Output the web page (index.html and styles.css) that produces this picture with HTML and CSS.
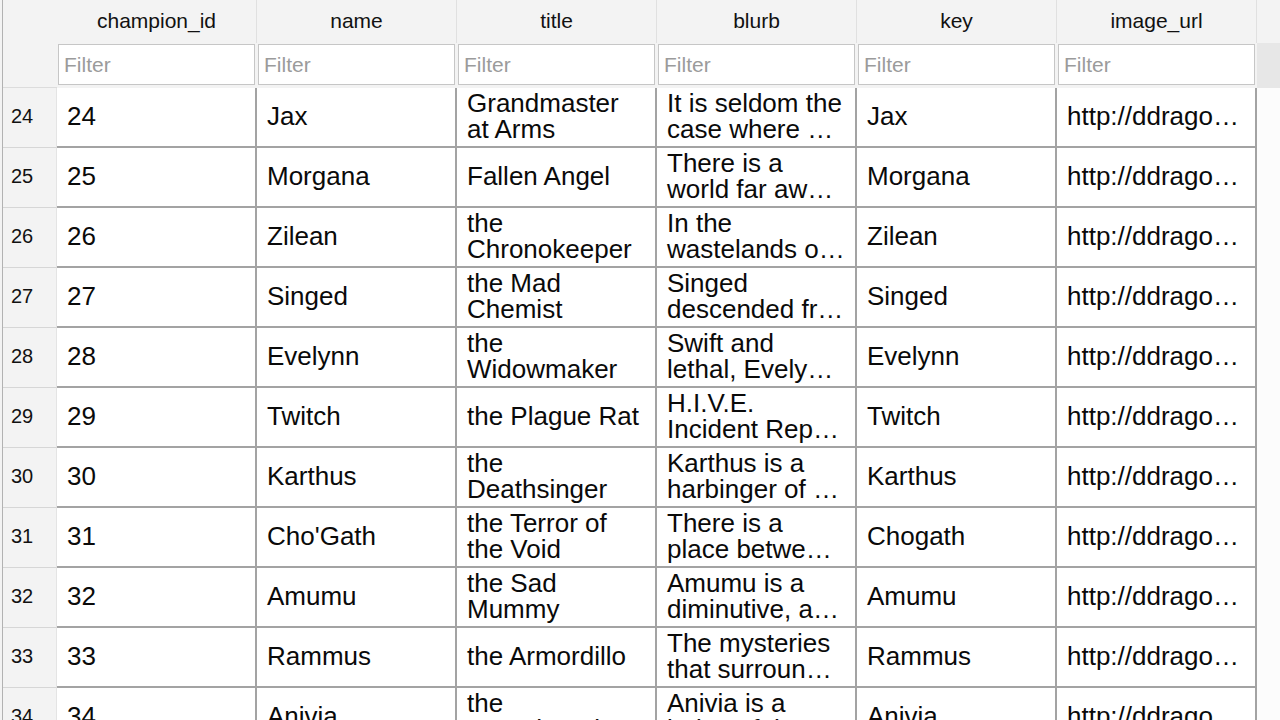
FILE: index.html
```html
<!DOCTYPE html>
<html>
<head>
<meta charset="utf-8">
<title>champions</title>
<link rel="stylesheet" href="styles.css">
</head>
<body>
<div class="grid">
  <div class="hcell corner"></div>
  <div class="hcell">champion_id</div>
  <div class="hcell">name</div>
  <div class="hcell">title</div>
  <div class="hcell">blurb</div>
  <div class="hcell">key</div>
  <div class="hcell">image_url</div>
  <div class="hcell fill"></div>

  <div class="fcell corner"></div>
  <div class="fcell"><input class="filter" placeholder="Filter"></div>
  <div class="fcell"><input class="filter" placeholder="Filter"></div>
  <div class="fcell"><input class="filter" placeholder="Filter"></div>
  <div class="fcell"><input class="filter" placeholder="Filter"></div>
  <div class="fcell"><input class="filter" placeholder="Filter"></div>
  <div class="fcell"><input class="filter" placeholder="Filter"></div>
  <div class="fcell ffill"></div>

  <div class="rh">24</div><div class="c">24</div><div class="c">Jax</div><div class="c">Grandmaster at Arms</div><div class="c nw">It is seldom the<br>case where …</div><div class="c">Jax</div><div class="c nw">http://ddrago…</div><div class="dfill"></div>
  <div class="rh">25</div><div class="c">25</div><div class="c">Morgana</div><div class="c">Fallen Angel</div><div class="c nw">There is a<br>world far aw…</div><div class="c">Morgana</div><div class="c nw">http://ddrago…</div><div class="dfill"></div>
  <div class="rh">26</div><div class="c">26</div><div class="c">Zilean</div><div class="c">the Chronokeeper</div><div class="c nw">In the<br>wastelands o…</div><div class="c">Zilean</div><div class="c nw">http://ddrago…</div><div class="dfill"></div>
  <div class="rh">27</div><div class="c">27</div><div class="c">Singed</div><div class="c">the Mad Chemist</div><div class="c nw">Singed<br>descended fr…</div><div class="c">Singed</div><div class="c nw">http://ddrago…</div><div class="dfill"></div>
  <div class="rh">28</div><div class="c">28</div><div class="c">Evelynn</div><div class="c">the Widowmaker</div><div class="c nw">Swift and<br>lethal, Evely…</div><div class="c">Evelynn</div><div class="c nw">http://ddrago…</div><div class="dfill"></div>
  <div class="rh">29</div><div class="c">29</div><div class="c">Twitch</div><div class="c">the Plague Rat</div><div class="c nw">H.I.V.E.<br>Incident Rep…</div><div class="c">Twitch</div><div class="c nw">http://ddrago…</div><div class="dfill"></div>
  <div class="rh">30</div><div class="c">30</div><div class="c">Karthus</div><div class="c">the Deathsinger</div><div class="c nw">Karthus is a<br>harbinger of …</div><div class="c">Karthus</div><div class="c nw">http://ddrago…</div><div class="dfill"></div>
  <div class="rh">31</div><div class="c">31</div><div class="c">Cho'Gath</div><div class="c">the Terror of the Void</div><div class="c nw">There is a<br>place betwe…</div><div class="c">Chogath</div><div class="c nw">http://ddrago…</div><div class="dfill"></div>
  <div class="rh">32</div><div class="c">32</div><div class="c">Amumu</div><div class="c">the Sad Mummy</div><div class="c nw">Amumu is a<br>diminutive, a…</div><div class="c">Amumu</div><div class="c nw">http://ddrago…</div><div class="dfill"></div>
  <div class="rh">33</div><div class="c">33</div><div class="c">Rammus</div><div class="c">the Armordillo</div><div class="c nw">The mysteries<br>that surroun…</div><div class="c">Rammus</div><div class="c nw">http://ddrago…</div><div class="dfill"></div>
  <div class="rh">34</div><div class="c">34</div><div class="c">Anivia</div><div class="c">the Cryophoenix</div><div class="c nw">Anivia is a<br>being of the…</div><div class="c">Anivia</div><div class="c nw">http://ddrago…</div><div class="dfill"></div>
</div>
</body>
</html>
```

FILE: styles.css
```css
html, body {
  margin: 0;
  padding: 0;
  background: #f3f3f3;
  overflow: hidden;
  height: 720px;
}
body {
  padding-left: 2px;
  font-family: "Liberation Sans", Arial, Helvetica, sans-serif;
  color: #111;
}
.grid {
  display: grid;
  grid-template-columns: 54px repeat(6, 200px) 1fr;
  grid-auto-rows: 60px;
  grid-template-rows: 43px 45px;
  border-left: 1px solid #b2b2b2;
  min-height: 720px;
}
.hcell {
  background: #f3f3f3;
  border-right: 1px solid #e0e0e0;
  font-size: 21px;
  display: flex;
  align-items: center;
  justify-content: center;
  padding-bottom: 2px;
  color: #111;
}
.hcell.corner, .hcell.fill { border-right: none; }
.fcell {
  background: #f3f3f3;
  padding: 1px 2px 3px 1px;
  box-sizing: border-box;
}
.fcell.corner { border-bottom: 1px solid #dcdcdc; }
.fcell.ffill { background: #e7e7e7; padding: 0; }
.filter {
  display: block;
  box-sizing: border-box;
  width: 197px;
  height: 41px;
  margin: 0;
  border: 1px solid #c6c6c6;
  background: #fff;
  font-family: "Liberation Sans", Arial, sans-serif;
  font-size: 21px;
  padding: 0 5px;
  outline: none;
}
.filter::placeholder { color: #9b9b9b; }
.rh {
  background: #f3f3f3;
  border-bottom: 1px solid #d6d6d6;
  border-right: 1px solid #e4e4e4;
  font-size: 20px;
  display: flex;
  align-items: center;
  padding-left: 8px;
  padding-bottom: 2px;
}
.c {
  background: #fff;
  border-right: 2px solid #a3a3a3;
  border-bottom: 2px solid #a3a3a3;
  font-size: 26px;
  line-height: 26px;
  display: flex;
  align-items: center;
  padding: 0 12px 2px 10px;
  overflow: hidden;
  color: #0a0a0a;
}
.c.nw {
  white-space: nowrap;
  padding-right: 0;
}
.dfill {
  background: #fcfcfc;
}
```
